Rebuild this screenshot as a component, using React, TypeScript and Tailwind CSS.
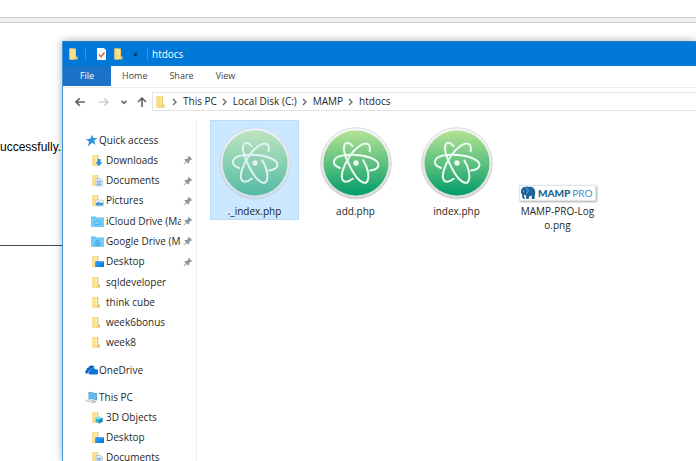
import type { ReactNode } from 'react';
import clsx from 'clsx';

type IconKind =
  | 'star'
  | 'folder'
  | 'downloads'
  | 'documents'
  | 'pictures'
  | 'icloud'
  | 'gdrive'
  | 'desktop'
  | 'onedrive'
  | 'pc'
  | 'objects';

interface TreeEntry {
  label: string;
  icon: IconKind;
  root?: boolean;
  pinned?: boolean;
}

const QUICK_ACCESS: TreeEntry[] = [
  { label: 'Quick access', icon: 'star', root: true },
  { label: 'Downloads', icon: 'downloads', pinned: true },
  { label: 'Documents', icon: 'documents', pinned: true },
  { label: 'Pictures', icon: 'pictures', pinned: true },
  { label: 'iCloud Drive (Ma', icon: 'icloud', pinned: true },
  { label: 'Google Drive (Ma', icon: 'gdrive', pinned: true },
  { label: 'Desktop', icon: 'desktop', pinned: true },
  { label: 'sqldeveloper', icon: 'folder' },
  { label: 'think cube', icon: 'folder' },
  { label: 'week6bonus', icon: 'folder' },
  { label: 'week8', icon: 'folder' },
];

const ONEDRIVE: TreeEntry[] = [{ label: 'OneDrive', icon: 'onedrive', root: true }];

const THIS_PC: TreeEntry[] = [
  { label: 'This PC', icon: 'pc', root: true },
  { label: '3D Objects', icon: 'objects' },
  { label: 'Desktop', icon: 'desktop' },
  { label: 'Documents', icon: 'documents' },
];

const CRUMBS = ['This PC', 'Local Disk (C:)', 'MAMP', 'htdocs'];

function FolderShape() {
  return (
    <>
      <path d="M1.500 1h5.800v7.500H9v3.200H1.500z" fill="#f0c75e" />
      <path d="M1.500 1h3.800v10.700H1.500z" fill="#fbdf8c" />
      <path d="M4.500 2l1.500-.8v8.500l-1.500 2z" fill="#fff0b8" />
    </>
  );
}

function TreeIcon({ kind }: { kind: IconKind }) {
  let art: ReactNode = <FolderShape />;
  if (kind === 'star') {
    art = <path d="M7.200 .8l1.100 3.300 4.300-.1-3.600 2.700 1.700 4.300-3.600-2.200-4.200 3.600 1.200-4.900L.8 5.300l4.500-.6z" fill="#2a93e0" />;
  } else if (kind === 'downloads') {
    art = (
      <>
        <FolderShape />
        <path d="M6.500 5h3v3.200h2L8 12 4.500 8.200h2z" fill="#2f8fdc" />
      </>
    );
  } else if (kind === 'documents') {
    art = (
      <>
        <FolderShape />
        <path d="M5 4.500h4.500L11.500 6.500V12H5z" fill="#dbe7f0" stroke="#9fb6c8" strokeWidth=".6" />
        <path d="M6 7.500h4M6 9h4M6 10.500h4" stroke="#5b9fd3" strokeWidth=".8" />
      </>
    );
  } else if (kind === 'pictures') {
    art = (
      <>
        <FolderShape />
        <path d="M4.500 6h8v6h-8z" fill="#e6f1f8" stroke="#a9c0cf" strokeWidth=".5" />
        <path d="M5 9l2.500-1 2 1L12 8.500v3H5z" fill="#4c92c9" />
      </>
    );
  } else if (kind === 'icloud' || kind === 'gdrive') {
    art = (
      <>
        <path d="M0 1.500h4.500l1 1H13v9.500H0z" fill="#5fc2f2" />
        <path d="M0 3.300h13V12H0z" fill="#74d0fa" />
        {kind === 'icloud' ? (
          <path d="M4 9.700a1.400 1.400 0 01.2-2.700 2.300 2.300 0 014.300-.2A1.500 1.500 0 019 9.700z" fill="none" stroke="#3da4dc" strokeWidth=".8" />
        ) : (
          <path d="M5.800 5.200h1.500L9.500 9.200l-.8 1.200H4.400l-.8-1.200zM6.500 6.700l-1.200 2.300h2.500z" fill="none" stroke="#359fd9" strokeWidth=".8" />
        )}
      </>
    );
  } else if (kind === 'desktop') {
    art = (
      <>
        <FolderShape />
        <path d="M4.500 6.500H13V12H4.500z" fill="#1080dc" />
        <path d="M4.500 6.500H13L6.500 12h-2z" fill="#2196f0" />
      </>
    );
  } else if (kind === 'onedrive') {
    art = (
      <>
        <path d="M2 10a2.200 2.200 0 01-.5-4.100A2.500 2.500 0 013.500 3.500a3.700 3.700 0 016.300-.5L6.500 4.500 3.800 7z" fill="#0a5fc0" />
        <path d="M4.500 10.500a2 2 0 01.2-3.700A3.200 3.200 0 0110.500 5.500a2.500 2.500 0 011.300 5z" fill="#0f74d4" />
      </>
    );
  } else if (kind === 'pc') {
    art = (
      <>
        <path d="M3.500 .8l8.500 1.500v7L3.500 7.500z" fill="#5a9fc9" />
        <path d="M4.200 1.700l7 1.200v5.300L4.200 7z" fill="#5cc0f5" />
        <path d="M0 10l3.500-2L12 10l-3 2.300z" fill="#a9b4bd" />
        <path d="M1 10l2.500-1.400L9.500 10.200 8 11.500z" fill="#e0e5e9" />
      </>
    );
  } else if (kind === 'objects') {
    art = (
      <>
        <FolderShape />
        <path d="M8 5.500l3.500 1.500v3.800L8 12.500l-3.500-1.700V7z" fill="#35b9d4" />
        <path d="M8 5.500L11.500 7 8 8.500 4.500 7z" fill="#96e4ef" />
        <path d="M8 8.500L11.500 7v3.800L8 12.500z" fill="#168fae" />
      </>
    );
  }
  return (
    <svg viewBox="0 0 13 13" className="size-[13px] shrink-0" aria-hidden="true">
      {art}
    </svg>
  );
}

function PinIcon() {
  return (
    <svg viewBox="0 0 10 10" className="size-[10px] shrink-0" aria-hidden="true">
      <path d="M5.800 .8l3.400 3.400-.9.6-.7-.1-1.500 1.500.1 1.700-.9.7-1.600-1.600L.9 9.600l-.5-.4L2.900 6.200 1.400 4.700l.8-.8 1.700.1 1.500-1.500-.2-.9z" fill="#8b969f" />
    </svg>
  );
}

function TreeGroup({ entries, className }: { entries: TreeEntry[]; className?: string }) {
  return (
    <ul className={clsx('grid shrink-0 auto-rows-fr grid-cols-1', className)}>
      {entries.map((entry) => (
        <li key={entry.label} className="flex min-w-0">
          <button
            type="button"
            className={clsx('flex min-h-5 w-full min-w-0 items-center pr-[3px] text-left', entry.root ? 'gap-px pl-[22px]' : 'gap-0.5 pl-[28px]')}
          >
            <TreeIcon kind={entry.icon} />
            <span className="min-w-0 flex-1 overflow-hidden whitespace-nowrap">{entry.label}</span>
            {entry.pinned && <PinIcon />}
          </button>
        </li>
      ))}
    </ul>
  );
}

function AtomIcon({ id }: { id: string }) {
  return (
    <svg viewBox="0 0 72 74" className="h-[74px] w-[72px]" aria-hidden="true">
      <defs>
        <linearGradient id={`${id}-fill`} x1="0" y1="0" x2="0" y2="1">
          <stop offset="0" stopColor="#b5e294" />
          <stop offset=".5" stopColor="#5fc17f" />
          <stop offset="1" stopColor="#009c69" />
        </linearGradient>
        <linearGradient id={`${id}-rim`} x1="0" y1="0" x2="0" y2="1">
          <stop offset="0" stopColor="#f7f7f7" />
          <stop offset="1" stopColor="#d9d9d9" />
        </linearGradient>
      </defs>
      <circle cx="36" cy="37" r="35.500" fill="#000" opacity=".12" />
      <circle cx="36" cy="36" r="35.300" fill={`url(#${id}-rim)`} stroke="#c4c8c6" strokeWidth=".6" />
      <circle cx="36" cy="36" r="32.500" fill={`url(#${id}-fill)`} />
      <g fill="none" stroke="#ebfaf2" strokeWidth="2" strokeLinecap="round">
        <path d="M20 41C16 39.500 13.700 37.500 13.900 35C14.300 30.500 21 28 30.500 27.800C45 27.500 58 32 58.500 37.500C58.700 40.500 55.500 42.800 50 43.400" />
        <path d="M32.700 19.200C30 16 26.800 14.700 25 17C22.500 20.500 24.800 28.500 28.600 36.500C33 46 39 54.500 43.800 55.700C47.500 56.500 49.200 52 48 45C47.200 41 45.500 36.800 43.200 33.300" />
        <path d="M49.700 24.300C50.300 20.500 49.700 17.800 47.500 16.800C43.500 15 35.500 20.500 29.500 29.500C23.500 38.500 20.300 48.500 22.600 52.800C24.300 56 28.500 54.800 32.700 51.700" />
      </g>
      <circle cx="36" cy="36" r="2.700" fill="#ebfaf2" />
    </svg>
  );
}

function MampLogo() {
  return (
    <span className="flex h-4 w-[77px] items-center gap-0.5 border border-[#e3e6e8] bg-white font-[Lato,sans-serif] text-[10px] leading-none font-black text-[#1b5f93] shadow-[1px_1px_2px_#0005]">
      <svg viewBox="0 0 16 14" className="h-[14px] w-4 shrink-0" aria-hidden="true">
        <path d="M1 6C.7 2.800 3 .7 5.500 1c1-.8 2.500-.8 3.500 0 3.500-.7 6 1.600 6.200 4.600.2 2.600-.6 4.400-.7 7.400h-2.600l-.4-3.400-2.300.6-.5 2.800H6.300L6 9.800 4.500 8.600c-.8 1.300-.6 3 .6 3.400l-.3 1C2.300 13 1.800 10.800 2.300 8.800 1.500 8.200 1 7.200 1 6z" fill="#1c649b" />
        <path d="M6 2.200C8.500 3 9 6 6.300 7.800" fill="none" stroke="#b9d8ee" strokeWidth=".7" />
        <circle cx="3.500" cy="5" r=".5" fill="#fff" />
      </svg>
      <span>MAMP</span>
      <span className="font-normal text-[#3f8fc8]">PRO</span>
    </span>
  );
}

function FileTile({ name, selected, children }: { name: string; selected?: boolean; children: ReactNode }) {
  return (
    <button
      type="button"
      aria-pressed={!!selected}
      className={clsx(
        'flex min-h-[100px] w-[89px] flex-col items-center self-start border px-1 pt-1',
        selected ? 'border-[#b8dcfa] bg-[#cce8ff]' : 'border-transparent',
      )}
    >
      <span className={clsx('flex h-[76px] items-end', selected && 'opacity-60')}>{children}</span>
      <span className="mt-[3px] max-w-full text-center leading-[14px] break-all">{name}</span>
    </button>
  );
}

function SmallFolder() {
  return (
    <svg viewBox="0 0 9 12" className="h-3 w-[9px] shrink-0" aria-hidden="true">
      <path d="M.5 .5h6.500v8h1.500v3h-8z" fill="#f0c862" />
      <path d="M.5 .5h4v11h-4z" fill="#fbdc80" />
      <path d="M4.500 1.300l1.200-.6v8.800l-1.200 2z" fill="#fff0b5" />
    </svg>
  );
}

function CrumbChevron() {
  return (
    <svg viewBox="0 0 5 8" className="h-2 w-[5px] shrink-0" aria-hidden="true">
      <path d="M1 1l3 3-3 3" fill="none" stroke="#666" strokeWidth="1.300" />
    </svg>
  );
}

function NavButton({ label, width, color, d }: { label: string; width: string; color: string; d: string }) {
  return (
    <button type="button" aria-label={label} className={clsx('flex h-4 items-center justify-center', width)}>
      <svg viewBox="0 0 10 10" className="size-[10px]" aria-hidden="true">
        <path d={d} fill="none" stroke={color} strokeWidth="1.600" />
      </svg>
    </button>
  );
}

function TitleBar() {
  return (
    <header className="flex h-[25px] shrink-0 items-center border-t border-[#2b7fc4] bg-[#0078d7] pl-1.5 text-white">
      <SmallFolder />
      <span className="ml-[7px] h-3 w-px bg-[#4c8fc4]" />
      <button type="button" aria-label="Properties" className="ml-[11px]">
        <svg viewBox="0 0 9 12" className="h-3 w-[9px]" aria-hidden="true">
          <path d="M0 0h7l2 2v10H0z" fill="#f7f7f7" />
          <path d="M2 6.500l2 2.200 3.500-4.200" fill="none" stroke="#e2592b" strokeWidth="1.300" />
        </svg>
      </button>
      <button type="button" aria-label="New folder" className="ml-2">
        <SmallFolder />
      </button>
      <button type="button" aria-label="Customize Quick Access Toolbar" className="ml-[10px]">
        <svg viewBox="0 0 5 5" className="size-[5px]" aria-hidden="true">
          <path d="M.5 .5h4M.5 2h4L2.500 4.500z" fill="#0b2a45" stroke="#0b2a45" strokeWidth=".3" />
        </svg>
      </button>
      <span className="ml-[9px] h-3 w-px bg-[#4c8fc4]" />
      <h1 className="ml-1">htdocs</h1>
    </header>
  );
}

export default function App() {
  return (
    <div className="relative h-screen overflow-hidden bg-white font-['Open_Sans','Noto_Sans',sans-serif] text-[10px] text-[#1f1f1f]">
      <div className="pt-[17px]">
        <div className="h-1.5 border-y border-[#cfcfcf] bg-[#f0f0f0]" />
        <p className="pt-[115px] font-['Liberation_Sans',Arial,sans-serif] text-[12px] leading-[18px] text-black">uccessfully.</p>
        <hr className="mt-[89px] border-[#4a4a4a]" />
      </div>

      <div className="absolute top-[41px] right-0 bottom-0 left-[62px] flex flex-col border-l border-[#3d97df] bg-white shadow-[0_0_8px_#0005]">
        <TitleBar />
        <nav aria-label="Ribbon" className="flex h-[22px] shrink-0 items-start border-b border-[#ececec] text-[9px] leading-5 text-[#444]">
          <button type="button" className="h-5 w-12 bg-[#1a73c7] text-white">File</button>
          <button type="button" className="ml-[11px]">Home</button>
          <button type="button" className="ml-[22px]">Share</button>
          <button type="button" className="ml-[22px]">View</button>
        </nav>

        <div className="flex h-[27px] shrink-0 items-center pl-3">
          <NavButton label="Back" width="w-[10px]" color="#606060" d="M10 5H1M4.800 1.200L1 5l3.800 3.800" />
          <NavButton label="Forward" width="ml-[14px] w-[10px]" color="#d0d0d0" d="M0 5h9M5.200 1.200L9 5 5.200 8.800" />
          <NavButton label="Recent locations" width="ml-[10px] w-[10px]" color="#666" d="M2.500 3.800L5 6.300l2.500-2.500" />
          <NavButton label="Up" width="ml-[8px] w-[10px]" color="#606060" d="M5 10V1M1 5l4-4 4 4" />
          <div className="ml-[5px] flex h-[19px] flex-1 items-center border-y border-l border-[#e3e3e3] pl-[3px]">
            <SmallFolder />
            <ol className="flex items-center">
              {CRUMBS.map((crumb, i) => (
                <li key={crumb} className="flex items-center">
                  <span className={i === 0 ? 'pl-[7px]' : 'pl-[5px]'}>
                    <CrumbChevron />
                  </span>
                  <button type="button" className="pl-1.5">{crumb}</button>
                </li>
              ))}
            </ol>
          </div>
        </div>

        <div className="flex min-h-0 flex-1 pt-[5px]">
          <nav aria-label="Folders" className="flex w-[134px] shrink-0 flex-col gap-[7px] overflow-hidden border-r border-[#f0f0f0] pt-[10px]">
            <TreeGroup entries={QUICK_ACCESS} className="h-[223px]" />
            <TreeGroup entries={ONEDRIVE} />
            <TreeGroup entries={THIS_PC} />
          </nav>
          <main className="flex flex-1 flex-wrap content-start gap-3 pl-[13px]">
            <FileTile name="._index.php" selected>
              <AtomIcon id="dot-index" />
            </FileTile>
            <FileTile name="add.php">
              <AtomIcon id="add" />
            </FileTile>
            <FileTile name="index.php">
              <AtomIcon id="index" />
            </FileTile>
            <FileTile name="MAMP-PRO-Logo.png">
              <MampLogo />
            </FileTile>
          </main>
        </div>
      </div>
    </div>
  );
}
